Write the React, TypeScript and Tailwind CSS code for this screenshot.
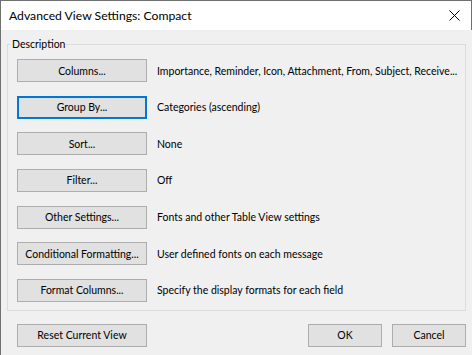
import React from "react";

const rows: { label: string; desc: string; focused?: boolean }[] = [
  { label: "Columns...", desc: "Importance, Reminder, Icon, Attachment, From, Subject, Receive..." },
  { label: "Group By...", desc: "Categories (ascending)", focused: true },
  { label: "Sort...", desc: "None" },
  { label: "Filter...", desc: "Off" },
  { label: "Other Settings...", desc: "Fonts and other Table View settings" },
  { label: "Conditional Formatting...", desc: "User defined fonts on each message" },
  { label: "Format Columns...", desc: "Specify the display formats for each field" },
];

function Btn({ children, w, focused }: { children: React.ReactNode; w: string; focused?: boolean }) {
  return (
    <button
      className={
        focused
          ? `${w} h-[23px] shrink-0 bg-[#e1e1e1] border-2 border-[#0078d7] flex items-center justify-center text-black whitespace-nowrap`
          : `${w} h-[23px] shrink-0 bg-[#e1e1e1] border border-[#adadad] flex items-center justify-center text-black whitespace-nowrap`
      }
    >
      {children}
    </button>
  );
}

export default function App() {
  return (
    <div
      className="w-[472px] h-[355px] bg-[#f0f0f0] border-l border-t border-[#707070] overflow-hidden text-[10.5px] leading-[16px] text-black"
      style={{ fontFamily: 'Lato, "Noto Sans", sans-serif' }}
    >
      <div className="h-[29px] bg-white border-r border-[#707070] flex items-center justify-between pl-[8px] pr-[10px]">
        <span className="text-[12.2px]">Advanced View Settings: Compact</span>
        <svg width="11" height="11" viewBox="0 0 11 11" className="mr-[1px]">
          <path d="M0.5 0.5 L10.5 10.5 M10.5 0.5 L0.5 10.5" stroke="#000" strokeWidth="1" />
        </svg>
      </div>
      <div className="pl-[6px] pr-[6px] pt-[6px]">
        <fieldset className="border border-[#dcdcdc] w-[459px] pl-[9px] pt-[7px] pb-[8px] m-0">
          <legend className="ml-[-6px] px-[1px] leading-[16px]">Description</legend>
          <div className="flex flex-col gap-[13.67px]">
            {rows.map((r) => (
              <div key={r.label} className="flex items-center gap-[10px]">
                <Btn w="w-[130px]" focused={r.focused}>
                  {r.label}
                </Btn>
                <span className="whitespace-nowrap">{r.desc}</span>
              </div>
            ))}
          </div>
        </fieldset>
        <div className="flex items-center mt-[13px] pl-[10px] w-[459px]">
          <Btn w="w-[130px]">Reset Current View</Btn>
          <div className="flex-1" />
          <Btn w="w-[74px]">OK</Btn>
          <div className="w-[10px]" />
          <Btn w="w-[74px]">Cancel</Btn>
        </div>
      </div>
    </div>
  );
}
